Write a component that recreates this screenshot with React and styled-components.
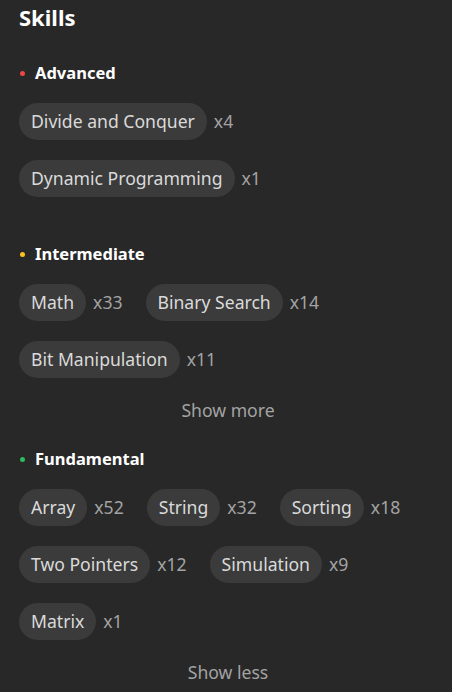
import React from "react";
import styled, { createGlobalStyle } from "styled-components";

const GlobalStyle = createGlobalStyle`
  body {
    margin: 0;
    background: #282828;
    font-family: "Noto Sans", "Open Sans", sans-serif;
  }
`;

const Panel = styled.div`
  padding: 2px 15px 0 19px;
  color: #eff1f6;
`;

const Title = styled.h2`
  margin: 0 0 29px;
  font-size: 22px;
  line-height: 30px;
  font-weight: 700;
  color: #ffffff;
`;

const Section = styled.section`
  margin-bottom: 25px;
`;

const Heading = styled.div`
  display: flex;
  align-items: center;
  gap: 10px;
  padding-left: 1px;
  font-size: 16.5px;
  line-height: 24px;
  font-weight: 700;
  color: #ffffff;
  margin-bottom: 18px;
`;

const Dot = styled.span`
  width: 5px;
  height: 5px;
  border-radius: 50%;
  background: ${(p) => p.color};
`;

const TagList = styled.div`
  display: flex;
  flex-wrap: wrap;
  column-gap: 23px;
`;

const Item = styled.div`
  display: flex;
  align-items: center;
  gap: 7px;
  margin-bottom: 20px;
`;

const Pill = styled.span`
  display: inline-block;
  padding: 8px 12px;
  border-radius: 19px;
  background: #3b3b3b;
  color: #dadada;
  font-size: 17.6px;
  line-height: 21px;
`;

const Count = styled.span`
  color: #a3a3a3;
  font-size: 17.6px;
  line-height: 21px;
`;

const Toggle = styled.button`
  display: block;
  width: 100%;
  padding: 0;
  border: 0;
  background: none;
  text-align: center;
  color: #a3a3a3;
  font-family: inherit;
  font-size: 17.6px;
  line-height: 24px;
  cursor: pointer;
`;

const sections = [
  {
    name: "Advanced",
    color: "#ef4743",
    tags: [
      ["Divide and Conquer", 4],
      ["Dynamic Programming", 1],
    ],
  },
  {
    name: "Intermediate",
    color: "#ffc01e",
    tags: [
      ["Math", 33],
      ["Binary Search", 14],
      ["Bit Manipulation", 11],
    ],
    toggle: "Show more",
  },
  {
    name: "Fundamental",
    color: "#2cbb5d",
    tags: [
      ["Array", 52],
      ["String", 32],
      ["Sorting", 18],
      ["Two Pointers", 12],
      ["Simulation", 9],
      ["Matrix", 1],
    ],
    toggle: "Show less",
  },
];

const breakAfter = { "Divide and Conquer": true };

const App = () => (
  <>
    <GlobalStyle />
    <Panel>
      <Title>Skills</Title>
      {sections.map((s) => (
        <Section key={s.name}>
          <Heading>
            <Dot color={s.color} />
            {s.name}
          </Heading>
          <TagList>
            {s.tags.map(([tag, n]) => (
              <Item key={tag} style={breakAfter[tag] ? { flexBasis: "100%" } : undefined}>
                <Pill>{tag}</Pill>
                <Count>x{n}</Count>
              </Item>
            ))}
          </TagList>
          {s.toggle && <Toggle>{s.toggle}</Toggle>}
        </Section>
      ))}
    </Panel>
  </>
);

export default App;
